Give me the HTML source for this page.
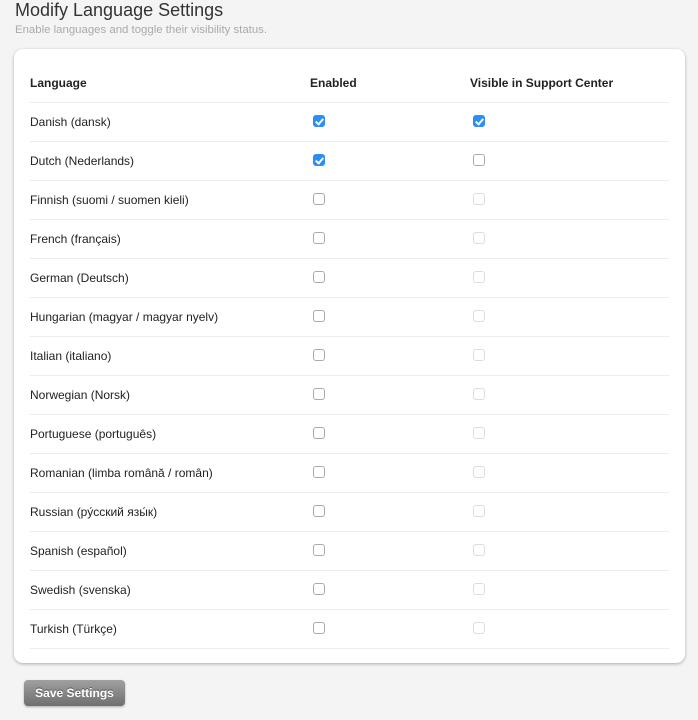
<!DOCTYPE html>
<html><head><meta charset="utf-8"><style>
*{box-sizing:border-box;margin:0;padding:0}
body{width:698px;height:720px;background:#f4f4f4;font-family:"Liberation Sans",sans-serif;position:relative;overflow:hidden}
h1{position:absolute;left:15px;top:0px;font-size:18px;font-weight:normal;color:#333}
.sub{position:absolute;left:15px;top:24px;font-size:11.4px;color:#aaa}
.card{position:absolute;left:14px;top:49px;width:671px;height:614px;background:#fff;border-radius:9px;box-shadow:0 1px 3px rgba(0,0,0,.3)}
.row{position:absolute;left:16px;width:639px;height:39px;border-bottom:1px solid #ececec;font-size:12px;color:#222}
.row span{position:absolute;top:12px}
.c1{left:0}.c2{left:280px}.c3{left:440px}
.hd span{font-weight:bold;font-size:12px}
.cb{position:absolute;top:12px;width:12px;height:12px;border:1px solid #aaa;border-radius:3px;background:#fff}
.cb.d{border-color:#ddd}
.cb.on{background:#2b8ef5;border-color:#2b8ef5}
.cb.on::after{content:"";position:absolute;left:3px;top:1px;width:3px;height:6px;border:solid #fff;border-width:0 2px 2px 0;transform:rotate(40deg)}
.e{left:283px}.v{left:443px}
.btn{position:absolute;left:24px;top:680px;width:101px;height:26px;border-radius:4px;background:linear-gradient(#a0a0a0,#6f6f6f);color:#fff;font-weight:bold;font-size:12px;text-align:center;line-height:26px;text-shadow:0 -1px 0 #555;box-shadow:0 1px 2px rgba(0,0,0,.3)}
</style></head><body>
<h1>Modify Language Settings</h1>
<div class="sub">Enable languages and toggle their visibility status.</div>
<div class="card">
<div class="row hd" style="top:14px;height:40px"><span class="c1" style="top:13px">Language</span><span class="c2" style="top:13px">Enabled</span><span class="c3" style="top:13px">Visible in Support Center</span></div>
<div class="row" style="top:54px"><span class="c1">Danish (dansk)</span><i class="cb on e"></i><i class="cb on v"></i></div>
<div class="row" style="top:93px"><span class="c1">Dutch (Nederlands)</span><i class="cb on e"></i><i class="cb v"></i></div>
<div class="row" style="top:132px"><span class="c1">Finnish (suomi / suomen kieli)</span><i class="cb e"></i><i class="cb d v"></i></div>
<div class="row" style="top:171px"><span class="c1">French (français)</span><i class="cb e"></i><i class="cb d v"></i></div>
<div class="row" style="top:210px"><span class="c1">German (Deutsch)</span><i class="cb e"></i><i class="cb d v"></i></div>
<div class="row" style="top:249px"><span class="c1">Hungarian (magyar / magyar nyelv)</span><i class="cb e"></i><i class="cb d v"></i></div>
<div class="row" style="top:288px"><span class="c1">Italian (italiano)</span><i class="cb e"></i><i class="cb d v"></i></div>
<div class="row" style="top:327px"><span class="c1">Norwegian (Norsk)</span><i class="cb e"></i><i class="cb d v"></i></div>
<div class="row" style="top:366px"><span class="c1">Portuguese (português)</span><i class="cb e"></i><i class="cb d v"></i></div>
<div class="row" style="top:405px"><span class="c1">Romanian (limba română / român)</span><i class="cb e"></i><i class="cb d v"></i></div>
<div class="row" style="top:444px"><span class="c1">Russian (ру́сский язы́к)</span><i class="cb e"></i><i class="cb d v"></i></div>
<div class="row" style="top:483px"><span class="c1">Spanish (español)</span><i class="cb e"></i><i class="cb d v"></i></div>
<div class="row" style="top:522px"><span class="c1">Swedish (svenska)</span><i class="cb e"></i><i class="cb d v"></i></div>
<div class="row" style="top:561px"><span class="c1">Turkish (Türkçe)</span><i class="cb e"></i><i class="cb d v"></i></div>
</div>
<div class="btn">Save Settings</div>
</body></html>
